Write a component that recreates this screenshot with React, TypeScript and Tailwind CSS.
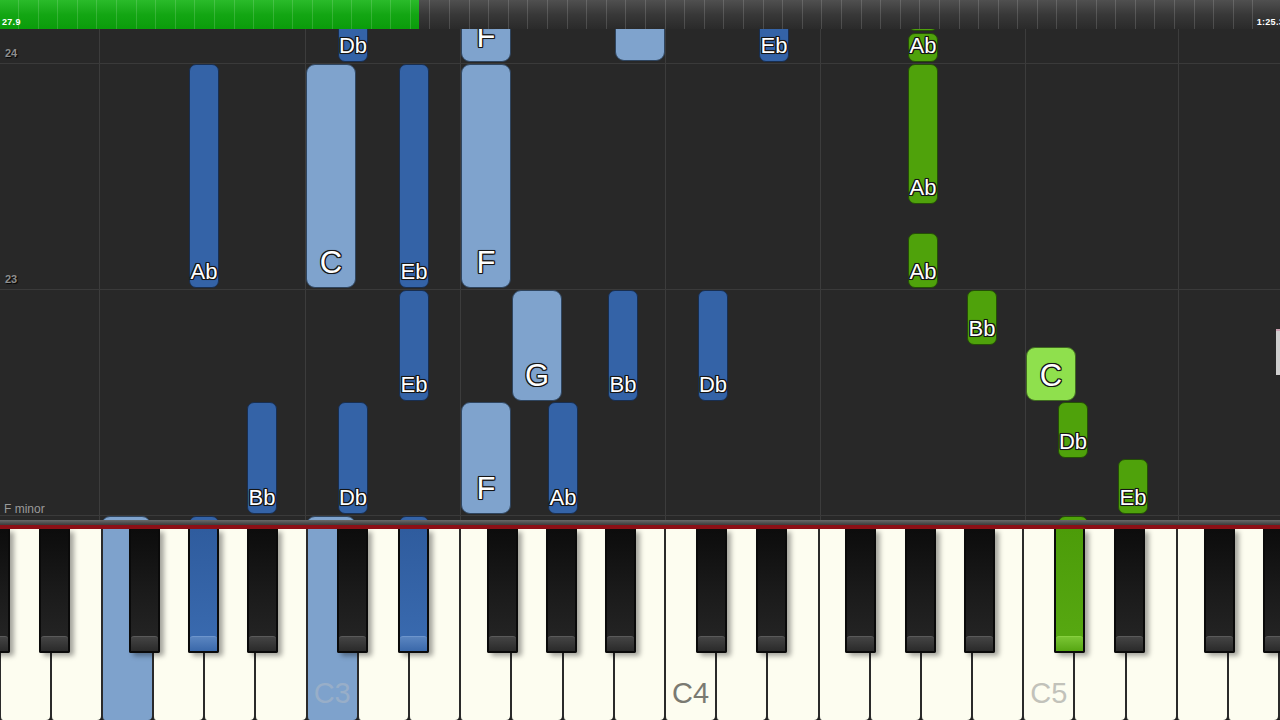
import React from "react";

type Note = { x: number; w: number; y1: number; y2: number; c: "db" | "lb" | "g" | "lime"; l: string };

const ROLL_TOP = 29;

const notes: Note[] = [
  { x: 338, w: 30, y1: -10, y2: 62, c: "db", l: "Db" },
  { x: 461, w: 50, y1: -10, y2: 62, c: "lb", l: "F" },
  { x: 615, w: 50, y1: -10, y2: 61, c: "lb", l: "" },
  { x: 759, w: 30, y1: -10, y2: 62, c: "db", l: "Eb" },
  { x: 908, w: 30, y1: -10, y2: 31, c: "g", l: "" },
  { x: 908, w: 30, y1: 33, y2: 62, c: "g", l: "Ab" },
  { x: 189, w: 30, y1: 64, y2: 288, c: "db", l: "Ab" },
  { x: 306, w: 50, y1: 64, y2: 288, c: "lb", l: "C" },
  { x: 399, w: 30, y1: 64, y2: 288, c: "db", l: "Eb" },
  { x: 461, w: 50, y1: 64, y2: 288, c: "lb", l: "F" },
  { x: 908, w: 30, y1: 64, y2: 204, c: "g", l: "Ab" },
  { x: 908, w: 30, y1: 233, y2: 288, c: "g", l: "Ab" },
  { x: 399, w: 30, y1: 290, y2: 401, c: "db", l: "Eb" },
  { x: 512, w: 50, y1: 290, y2: 401, c: "lb", l: "G" },
  { x: 608, w: 30, y1: 290, y2: 401, c: "db", l: "Bb" },
  { x: 698, w: 30, y1: 290, y2: 401, c: "db", l: "Db" },
  { x: 967, w: 30, y1: 290, y2: 345, c: "g", l: "Bb" },
  { x: 1026, w: 50, y1: 347, y2: 401, c: "lime", l: "C" },
  { x: 1058, w: 30, y1: 402, y2: 458, c: "g", l: "Db" },
  { x: 1118, w: 30, y1: 459, y2: 514, c: "g", l: "Eb" },
  { x: 247, w: 30, y1: 402, y2: 514, c: "db", l: "Bb" },
  { x: 338, w: 30, y1: 402, y2: 514, c: "db", l: "Db" },
  { x: 461, w: 50, y1: 402, y2: 514, c: "lb", l: "F" },
  { x: 548, w: 30, y1: 402, y2: 514, c: "db", l: "Ab" },
  { x: 101, w: 50, y1: 516, y2: 560, c: "lb", l: "" },
  { x: 189, w: 30, y1: 516, y2: 560, c: "db", l: "" },
  { x: 306, w: 50, y1: 516, y2: 560, c: "lb", l: "" },
  { x: 399, w: 30, y1: 516, y2: 560, c: "db", l: "" },
  { x: 1058, w: 30, y1: 516, y2: 560, c: "g", l: "" },
];

const noteColor: Record<Note["c"], string> = {
  db: "bg-[#3463a7] border-[#182e50]",
  lb: "bg-[#7fa3cd] border-[#2f455f]",
  g: "bg-[#4fa20b] border-[#244f05]",
  lime: "bg-[#8fe04d] border-[#3f6a20]",
};

const OUTLINE =
  "[text-shadow:1px_1px_0_#151515,-1px_-1px_0_#151515,1px_-1px_0_#151515,-1px_1px_0_#151515,0_1px_0_#151515,0_-1px_0_#151515,1px_0_0_#151515,-1px_0_0_#151515,0_0_2px_#000]";

const vLines = [99, 305, 460, 665, 820, 1025, 1178];
const hLines = [34, 260, 486];

const WK = 51.2;
const OFF = -1.5;

type BK = { b: number; o: number; p?: "blue" | "green" };
const blackKeys: BK[] = [];
[0, 7, 14, 21].forEach((c) => {
  blackKeys.push({ b: c, o: -4 });
  blackKeys.push({ b: c + 1, o: 5 });
  blackKeys.push({ b: c + 3, o: -8 });
  blackKeys.push({ b: c + 4, o: 0 });
  blackKeys.push({ b: c + 5, o: 8 });
});
blackKeys.forEach((k) => {
  if (k.b === 4 || k.b === 8) k.p = "blue";
  if (k.b === 21) k.p = "green";
});

const whiteNames = ["D", "E", "F", "G", "A", "B", "C"];

function TopBar() {
  const ticks = Array.from({ length: 64 });
  return (
    <div className="relative h-[29px] shrink-0 flex bg-linear-to-b from-[#505050] via-[#383838] to-[#2a2a2a]">
      <div className="w-[419px] h-full bg-linear-to-b from-[#2abb2a] via-[#13a613] to-[#0a9c0a]" />
      <div className="absolute inset-0 flex pl-[18px] overflow-hidden">
        {ticks.map((_, i) => (
          <div key={i} className="w-[19.6px] shrink-0 h-full border-l border-white/15" />
        ))}
      </div>
      <div className="absolute inset-x-0 bottom-[2px] flex justify-between pl-[2px] pr-0 text-[9px] leading-none font-bold text-white tracking-[0.3px]">
        <span>27.9</span>
        <span className="-mr-[4px]">1:25.3</span>
      </div>
    </div>
  );
}

function Roll() {
  return (
    <div className="relative h-[491px] shrink-0 overflow-hidden bg-[#282828]">
      {vLines.map((x) => (
        <div key={x} className="absolute top-0 bottom-0 w-px bg-[#3c3c3c]" style={{ left: x }} />
      ))}
      {hLines.map((y) => (
        <div key={y} className="absolute left-0 right-0 h-px bg-[#3a3a3a]" style={{ top: y }} />
      ))}
      <span className="absolute left-[5px] top-[19px] text-[11px] leading-none font-bold text-[#8e8e8e] [text-shadow:1px_1px_1px_#000]">24</span>
      <span className="absolute left-[5px] top-[245px] text-[11px] leading-none font-bold text-[#8e8e8e] [text-shadow:1px_1px_1px_#000]">23</span>
      <span className="absolute left-[4px] top-[474px] text-[12px] leading-none text-[#9a9a9a]">F minor</span>

      {notes.map((n, i) => {
        const wide = n.w > 40;
        return (
          <div
            key={i}
            className={`absolute border ${noteColor[n.c]} ${wide ? "rounded-[9px]" : "rounded-[7px]"}`}
            style={{ left: n.x, width: n.w, top: n.y1 - ROLL_TOP, height: n.y2 - n.y1 }}
          >
            {n.l && (
              <span
                className={`absolute left-1/2 -translate-x-1/2 whitespace-nowrap leading-none text-white ${OUTLINE} ${
                  wide ? "bottom-[9px] text-[31px]" : "bottom-[4px] text-[22px]"
                }`}
              >
                {n.l}
              </span>
            )}
          </div>
        );
      })}

      <div className="absolute left-[1276px] top-[300px] w-[4px] h-[46px] bg-[#cfcfcf] border-t-2 border-[#c9a0b0]" />
    </div>
  );
}

function Keyboard() {
  const whites = Array.from({ length: 26 }, (_, i) => i);
  return (
    <div className="relative h-[191px] shrink-0 overflow-hidden bg-[#1e1e1e]">
      <div className="flex h-full -ml-[1.5px]">
        {whites.map((i) => {
          const name = whiteNames[i % 7];
          const oct = 2 + Math.floor((i + 1) / 7);
          const pressed = i === 2 || i === 6;
          const isC = name === "C";
          return (
            <div
              key={i}
              className={`w-[51.2px] shrink-0 h-full border-l-2 border-[#2a2a2a] rounded-b-[4px] flex flex-col justify-end items-center pb-[12px] ${
                pressed ? "bg-[#7ea2cc]" : "bg-[#fdfdf0]"
              }`}
            >
              {isC && (
                <span
                  className={`text-[29px] leading-none ${
                    oct === 3 ? "text-[#98aec8]" : oct === 4 ? "text-[#7a7a72]" : "text-[#c2c2ba]"
                  }`}
                >
                  {"C" + oct}
                </span>
              )}
            </div>
          );
        })}
      </div>

      {blackKeys.map((k, i) => {
        const center = k.b * WK + OFF + k.o;
        const body =
          k.p === "blue"
            ? "bg-linear-to-b from-[#2f5c9e] to-[#3a6bb0]"
            : k.p === "green"
            ? "bg-linear-to-b from-[#4c9c09] to-[#58a912]"
            : "bg-linear-to-b from-[#0c0c0c] via-[#1a1a1a] to-[#262626]";
        const lip =
          k.p === "blue"
            ? "bg-linear-to-b from-[#5a85c0] to-[#3a68aa] border-[#6d95cc]"
            : k.p === "green"
            ? "bg-linear-to-b from-[#79c532] to-[#56a611] border-[#88d040]"
            : "bg-linear-to-b from-[#444444] to-[#2a2a2a] border-[#5a5a5a]";
        return (
          <div
            key={i}
            className={`absolute top-0 h-[124px] w-[31px] border-2 border-t-0 border-[#0a0a0a] rounded-b-[2px] shadow-[4px_3px_5px_rgba(0,0,0,0.35)] flex flex-col justify-end ${body}`}
            style={{ left: center - 15.5 }}
          >
            <div className={`h-[15px] border-t rounded-t-[3px] ${lip}`} />
          </div>
        );
      })}
    </div>
  );
}

export default function App() {
  return (
    <div className="w-[1280px] h-[720px] flex flex-col overflow-hidden bg-[#282828] font-['Liberation_Sans',Arial,sans-serif]">
      <TopBar />
      <Roll />
      <div className="h-[5px] shrink-0 bg-linear-to-b from-[#6a6a6a] to-[#3c3c3c]" />
      <div className="h-[4px] shrink-0 bg-[#8c0f16]" />
      <Keyboard />
    </div>
  );
}
